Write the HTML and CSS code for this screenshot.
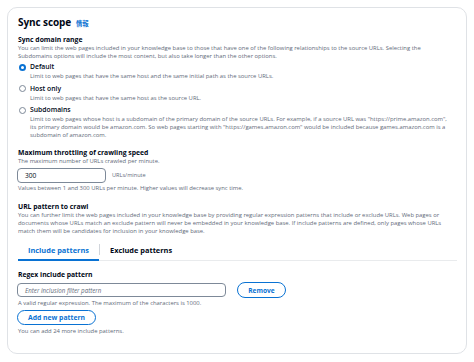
FILE: index.html
```html
<!DOCTYPE html>
<html>
<head>
<meta charset="utf-8">
<link rel="stylesheet" href="styles.css">
</head>
<body>
<div class="card">
  <div class="title-row">
    <h2 class="title">Sync scope</h2>
    <span class="info">情報</span>
  </div>

  <div class="field field-domain">
    <div class="label">Sync domain range</div>
    <div class="desc">You can limit the web pages included in your knowledge base to those that have one of the following relationships to the source URLs. Selecting the Subdomains options will include the most content, but also take longer than the other options.</div>
    <div class="radio-group">
      <div class="radio-item">
        <div class="radio-row"><span class="radio checked"></span><span class="radio-label">Default</span></div>
        <div class="desc radio-desc">Limit to web pages that have the same host and the same initial path as the source URLs.</div>
      </div>
      <div class="radio-item">
        <div class="radio-row"><span class="radio"></span><span class="radio-label">Host only</span></div>
        <div class="desc radio-desc">Limit to web pages that have the same host as the source URL.</div>
      </div>
      <div class="radio-item">
        <div class="radio-row"><span class="radio"></span><span class="radio-label">Subdomains</span></div>
        <div class="desc radio-desc">Limit to web pages whose host is a subdomain of the primary domain of the source URLs. For example, if a source URL was "https://prime.amazon.com", its primary domain would be amazon.com. So web pages starting with "https://games.amazon.com" would be included because games.amazon.com is a subdomain of amazon.com.</div>
      </div>
    </div>
  </div>

  <div class="field field-speed">
    <div class="label">Maximum throttling of crawling speed</div>
    <div class="desc">The maximum number of URLs crawled per minute.</div>
    <div class="speed-row">
      <div class="input speed-input">300</div>
      <span class="unit">URLs/minute</span>
    </div>
    <div class="desc hint">Values between 1 and 300 URLs per minute. Higher values will decrease sync time.</div>
  </div>

  <div class="field field-pattern">
    <div class="label">URL pattern to crawl</div>
    <div class="desc">You can further limit the web pages included in your knowledge base by providing regular expression patterns that include or exclude URLs. Web pages or documents whose URLs match an exclude pattern will never be embedded in your knowledge base. If include patterns are defined, only pages whose URLs match them will be candidates for inclusion in your knowledge base.</div>
    <div class="tabs">
      <div class="tab active">Include patterns</div>
      <div class="tab-sep"></div>
      <div class="tab">Exclude patterns</div>
    </div>
    <div class="tab-body">
      <div class="label">Regex include pattern</div>
      <div class="regex-row">
        <div class="input regex-input placeholder">Enter inclusion filter pattern</div>
        <div class="btn">Remove</div>
      </div>
      <div class="desc hint">A valid regular expression. The maximum of the characters is 1000.</div>
      <div class="btn add-btn">Add new pattern</div>
      <div class="desc hint">You can add 24 more include patterns.</div>
    </div>
  </div>
</div>
</body>
</html>
```

FILE: styles.css
```css
* { box-sizing: border-box; }
html, body { margin: 0; padding: 0; background: #ffffff; }
body {
  font-family: "Open Sans", "Noto Sans", "Noto Sans CJK JP", sans-serif;
  color: #000716;
}
.card {
  margin: 7px 7px 0 7px;
  height: 347px;
  border: 1px solid #dfe2e6;
  border-radius: 10px;
  padding: 7px 12px 0 10px;
}
.title-row {
  display: flex;
  align-items: baseline;
  gap: 5px;
}
.title {
  margin: 0;
  font-size: 10px;
  line-height: 14px;
  font-weight: 700;
  letter-spacing: -0.1px;
}
.info {
  font-size: 6.3px;
  font-weight: 700;
  color: #0972d3;
}
.field-domain { margin-top: 5.5px; }
.label {
  font-size: 6.8px;
  line-height: 9px;
  font-weight: 700;
}
.desc {
  font-size: 5.88px;
  line-height: 8px;
  color: #5f6b7a;
}
.radio-group { margin-top: 2.5px; }
.radio-item + .radio-item { margin-top: 3.5px; }
.radio-row {
  display: flex;
  align-items: center;
  height: 10px;
}
.radio {
  width: 7px;
  height: 7px;
  border-radius: 50%;
  border: 1px solid #7d8998;
  background: #fff;
  margin-left: 1px;
  margin-right: 4px;
  flex: none;
}
.radio.checked {
  border: 2px solid #0972d3;
}
.radio-label {
  font-size: 6.8px;
  font-weight: 600;
  line-height: 10px;
}
.radio-desc { padding-left: 12px; }

.field-speed { margin-top: 9px; }
.speed-row {
  display: flex;
  align-items: center;
  gap: 6px;
  margin-top: 2.5px;
}
.input {
  border: 1px solid #7d8998;
  border-radius: 4px;
  display: flex;
  align-items: center;
  padding: 0 7px;
  font-size: 6.6px;
}
.speed-input {
  width: 89px;
  height: 15px;
  margin-left: -1px;
}
.unit {
  font-size: 5.6px;
  color: #5f6b7a;
}
.hint { margin-top: 1px; }

.field-pattern { margin-top: 10.5px; }
.tabs {
  display: flex;
  align-items: center;
  margin-top: 2.5px;
  border-bottom: 1px solid #e9ebed;
  margin-right: -3px;
}
.tab {
  font-size: 7.4px;
  font-weight: 700;
  line-height: 10px;
  padding: 7px 10px 4px 10px;
  border-bottom: 2px solid transparent;
  margin-bottom: -1px;
}
.tab.active {
  color: #0972d3;
  border-bottom-color: #0972d3;
}
.tab-sep {
  width: 1px;
  height: 11px;
  background: #d1d5db;
  margin-top: 2px;
}
.tab-body { padding-top: 9.5px; }
.regex-row {
  display: flex;
  align-items: center;
  gap: 11px;
  margin-top: 3px;
}
.regex-input {
  width: 209px;
  height: 14.5px;
  margin-left: -1px;
}
.placeholder {
  font-style: italic;
  color: #5f6b7a;
  font-size: 6.2px;
}
.btn {
  height: 16px;
  border: 1px solid #0972d3;
  border-radius: 9px;
  color: #0972d3;
  font-size: 6.6px;
  font-weight: 700;
  display: flex;
  align-items: center;
  justify-content: center;
  padding: 0 10px;
}
.regex-row .btn { width: 49px; }
.add-btn {
  width: 79px;
  height: 15px;
  margin-top: 3px;
  margin-left: -1px;
  font-size: 6.8px;
}
.add-btn + .hint { margin-top: 2px; }
```
